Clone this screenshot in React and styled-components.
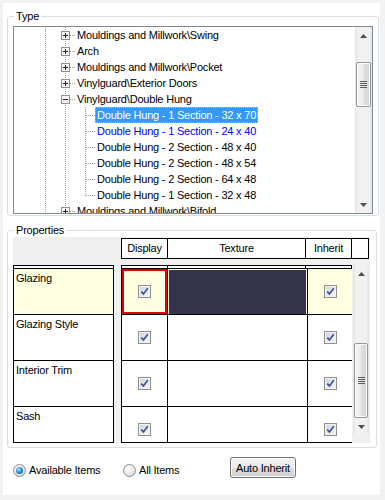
import React from "react";
import styled, { createGlobalStyle, css } from "styled-components";

const GlobalStyle = createGlobalStyle`
  html, body {
    margin: 0;
    padding: 0;
    background: #f2f2f2;
  }
  body {
    font-family: "Liberation Sans", Arial, sans-serif;
    font-size: 11px;
    letter-spacing: -0.2px;
    color: #000;
  }
`;

const treeRows = [
  { level: 1, box: "plus", text: "Mouldings and Millwork\\Swing" },
  { level: 1, box: "plus", text: "Arch" },
  { level: 1, box: "plus", text: "Mouldings and Millwork\\Pocket" },
  { level: 1, box: "plus", text: "Vinylguard\\Exterior Doors" },
  { level: 1, box: "minus", text: "Vinylguard\\Double Hung" },
  { level: 2, text: "Double Hung - 1 Section - 32 x 70", state: "selected" },
  { level: 2, text: "Double Hung - 1 Section - 24 x 40", state: "hot" },
  { level: 2, text: "Double Hung - 2 Section - 48 x 40" },
  { level: 2, text: "Double Hung - 2 Section - 48 x 54" },
  { level: 2, text: "Double Hung - 2 Section - 64 x 48" },
  { level: 2, text: "Double Hung - 1 Section - 32 x 48", last: true },
  { level: 1, box: "plus", text: "Mouldings and Millwork\\Bifold" },
];

const properties = [
  { name: "Glazing", current: true, texture: "#33334a" },
  { name: "Glazing Style" },
  { name: "Interior Trim" },
  { name: "Sash" },
];

function App() {
  return (
    <>
      <GlobalStyle />
      <Window>
        <GroupBox $w={372} $pt={3} $pb={1}>
          <Legend>Type</Legend>
          <TreeView>
            <TreeBody>
              {treeRows.map((row, i) => (
                <TreeRow key={i}>
                  <Indent />
                  <TreeGuide line="full" />
                  {row.level === 1 ? (
                    <TreeGuide line="full" branch box={row.box} />
                  ) : (
                    <>
                      <TreeGuide line="full" />
                      <TreeGuide line={row.last ? "half" : "full"} branch />
                    </>
                  )}
                  <NodeText $state={row.state}>{row.text}</NodeText>
                </TreeRow>
              ))}
            </TreeBody>
            <ScrollBar $w={17} $offset={18} $thumb={45} />
          </TreeView>
        </GroupBox>

        <GroupBox $w={370} $mt={8} $pt={0} $pb={4}>
          <Legend>Properties</Legend>
          <GridControl>
            <HeaderRow>
              <HeaderCell $w={45}>Display</HeaderCell>
              <HeaderCell $w={137}>Texture</HeaderCell>
              <HeaderCell $w={45}>Inherit</HeaderCell>
              <HeaderCell $w={16} />
            </HeaderRow>
            <GridBody>
              <NameColumn>
                <Row $h={2} $first />
                {properties.map((p) => (
                  <Row key={p.name} $h={46} $current={p.current}>
                    <NameCell>{p.name}</NameCell>
                  </Row>
                ))}
              </NameColumn>
              <ValueColumn>
                <Row $h={2} $first>
                  <Cell $w={45} />
                  <Cell $w={137} />
                  <Cell $w={45} />
                </Row>
                {properties.map((p) => (
                  <Row key={p.name} $h={46} $current={p.current}>
                    <Cell $w={45} $focused={p.current}>
                      <CheckBox />
                    </Cell>
                    <Cell $w={137} $swatch>
                      {p.texture && <Swatch $color={p.texture} />}
                    </Cell>
                    <Cell $w={45}>
                      <CheckBox />
                    </Cell>
                  </Row>
                ))}
              </ValueColumn>
              <ScrollBar $w={16} $offset={61} $thumb={75} $gap />
            </GridBody>
          </GridControl>
        </GroupBox>

        <OptionsRow>
          <RadioOption $w={110}>
            <Radio $checked />
            Available Items
          </RadioOption>
          <RadioOption $w={107}>
            <Radio />
            All Items
          </RadioOption>
          <PushButton type="button">Auto Inherit</PushButton>
        </OptionsRow>
      </Window>
    </>
  );
}

function TreeGuide({ line, branch, box }) {
  return (
    <GuideSvg width="20" height="16" viewBox="0 0 20 16">
      {line && (
        <line
          x1="10.5"
          y1="0"
          x2="10.5"
          y2={line === "full" ? 16 : 9}
          stroke="#a0a0a0"
          strokeDasharray="1 1"
        />
      )}
      {branch && (
        <line x1={box ? 15 : 11} y1="8.5" x2="20" y2="8.5" stroke="#a0a0a0" strokeDasharray="1 1" />
      )}
      {box && (
        <g>
          <rect x="6.5" y="4.5" width="8" height="8" fill="#f6f6f6" stroke="#919191" />
          <line x1="8" y1="8.5" x2="13" y2="8.5" stroke="#222" />
          {box === "plus" && <line x1="10.5" y1="6" x2="10.5" y2="11" stroke="#222" />}
        </g>
      )}
    </GuideSvg>
  );
}

function ScrollBar({ $w, $offset, $thumb, $gap }) {
  return (
    <ScrollTrackBar $w={$w} $gap={$gap}>
      <ScrollArrow>
        <svg width="7" height="4" viewBox="0 0 7 4">
          <path d="M0 4 L3.5 0 L7 4 Z" fill="#4d4d4d" />
        </svg>
      </ScrollArrow>
      <ScrollTrack $offset={$offset}>
        <ScrollThumb $size={$thumb}>
          <svg width="7" height="8" viewBox="0 0 7 8">
            {[0, 2, 4, 6].map((y) => (
              <rect key={y} x="0" y={y} width="7" height="1" fill="#5d5d5d" />
            ))}
          </svg>
        </ScrollThumb>
      </ScrollTrack>
      <ScrollArrow>
        <svg width="7" height="4" viewBox="0 0 7 4">
          <path d="M0 0 L7 0 L3.5 4 Z" fill="#4d4d4d" />
        </svg>
      </ScrollArrow>
    </ScrollTrackBar>
  );
}

function CheckBox() {
  return (
    <CheckFrame>
      <svg width="9" height="9" viewBox="0 0 9 9">
        <path d="M1.3 4.6 L3.4 6.9 L7.8 1.2" fill="none" stroke="#3d53a0" strokeWidth="1.7" />
      </svg>
    </CheckFrame>
  );
}

export default App;

const Window = styled.div`
  margin: 3px 0 0 3px;
  width: 377px;
  height: 492px;
  box-sizing: border-box;
  background: #fff;
  padding: 7px 0 0 4px;
  display: flex;
  flex-direction: column;
`;

const GroupBox = styled.fieldset`
  margin: ${(p) => p.$mt || 0}px 0 0 0;
  padding: ${(p) => p.$pt}px 0 ${(p) => p.$pb}px 5px;
  width: ${(p) => p.$w}px;
  min-width: 0;
  box-sizing: border-box;
  border: 1px solid #d5dfe5;
  border-radius: 3px;
`;

const Legend = styled.legend`
  margin-left: 1px;
  padding: 0 2px;
  line-height: 13px;
  font-size: 11px;
`;

const TreeView = styled.div`
  width: 360px;
  height: 188px;
  box-sizing: border-box;
  border: 1px solid #828790;
  display: flex;
  overflow: hidden;
  background: #fff;
`;

const TreeBody = styled.div`
  flex: 1;
  display: flex;
  flex-direction: column;
  overflow: hidden;
`;

const TreeRow = styled.div`
  display: flex;
  height: 16px;
  flex: none;
`;

const Indent = styled.div`
  width: 21px;
  flex: none;
`;

const GuideSvg = styled.svg`
  flex: none;
  display: block;
  shape-rendering: crispEdges;
`;

const NodeText = styled.span`
  height: 16px;
  line-height: 16px;
  padding: 0 2px;
  white-space: nowrap;
  color: ${(p) => (p.$state === "hot" ? "#0000ff" : p.$state === "selected" ? "#fff" : "#000")};
  background: ${(p) => (p.$state === "selected" ? "#3399ff" : "transparent")};
  ${(p) =>
    p.$state === "selected" &&
    css`
      outline: 1px dotted #ffb347;
      outline-offset: -1px;
    `}
`;

const ScrollTrackBar = styled.div`
  width: ${(p) => p.$w}px;
  margin-left: ${(p) => (p.$gap ? 1 : 0)}px;
  flex: none;
  display: flex;
  flex-direction: column;
  background: linear-gradient(to right, #e4e4e4 0, #f1f1f1 3px, #f1f1f1 calc(100% - 3px), #e4e4e4 100%);
`;

const ScrollArrow = styled.div`
  height: 17px;
  flex: none;
  display: flex;
  align-items: center;
  justify-content: center;
`;

const ScrollTrack = styled.div`
  flex: 1;
  display: flex;
  flex-direction: column;
  padding-top: ${(p) => p.$offset}px;
`;

const ScrollThumb = styled.div`
  height: ${(p) => p.$size}px;
  margin: 0 1px;
  flex: none;
  box-sizing: border-box;
  border: 1px solid #979797;
  border-radius: 2px;
  background: linear-gradient(to right, #f3f3f3 0%, #ececec 45%, #dedede 55%, #d3d3d3 100%);
  box-shadow: inset 0 0 0 1px #fafafa;
  display: flex;
  align-items: center;
  justify-content: center;
`;

const GridControl = styled.div`
  width: 357px;
  height: 206px;
  background: #f0f0f0;
  display: flex;
  flex-direction: column;
`;

const HeaderRow = styled.div`
  display: flex;
  align-self: flex-start;
  margin: 1px 0 0 108px;
  border: 1px solid #000;
  border-right: none;
  background: #fff;
`;

const HeaderCell = styled.div`
  width: ${(p) => p.$w}px;
  height: 19px;
  line-height: 19px;
  text-align: center;
  border-right: 1px solid #000;
`;

const GridBody = styled.div`
  display: flex;
  align-items: flex-start;
  margin-top: 6px;
  height: 178px;
`;

const NameColumn = styled.div`
  width: 101px;
  height: 178px;
  box-sizing: border-box;
  border: 1px solid #000;
  background: #fff;
  display: flex;
  flex-direction: column;
  overflow: hidden;
`;

const ValueColumn = styled.div`
  width: 231px;
  height: 178px;
  margin-left: 7px;
  box-sizing: border-box;
  border: 1px solid #000;
  border-right: none;
  background: #fff;
  display: flex;
  flex-direction: column;
  overflow: hidden;
`;

const Row = styled.div`
  display: flex;
  flex: none;
  height: ${(p) => p.$h}px;
  box-sizing: border-box;
  border-top: ${(p) => (p.$first ? "none" : "1px solid #000")};
  background: ${(p) => (p.$current ? "#ffffe1" : "#fff")};
`;

const NameCell = styled.div`
  padding: 2px 2px;
  line-height: 14px;
`;

const Cell = styled.div`
  width: ${(p) => p.$w}px;
  flex: none;
  border-right: 1px solid #000;
  display: flex;
  align-items: center;
  justify-content: center;
  ${(p) =>
    p.$swatch &&
    css`
      padding: 1px 1px 0 1px;
      align-items: stretch;
      justify-content: stretch;
    `}
  ${(p) =>
    p.$focused &&
    css`
      box-shadow: inset 0 0 0 2px #e00000;
    `}
`;

const Swatch = styled.div`
  flex: 1;
  background: ${(p) => p.$color};
`;

const CheckFrame = styled.span`
  width: 13px;
  height: 13px;
  box-sizing: border-box;
  border: 1px solid #8e8f8f;
  background: linear-gradient(135deg, #cfd2d6 0%, #e6e8ea 55%, #f7f7f7 100%);
  box-shadow: inset 0 0 0 1px #f2f2f2;
  display: flex;
  align-items: center;
  justify-content: center;
`;

const OptionsRow = styled.div`
  display: flex;
  align-items: flex-start;
  margin: 9px 0 0 6px;
`;

const RadioOption = styled.label`
  width: ${(p) => p.$w}px;
  flex: none;
  display: flex;
  align-items: center;
  gap: 3px;
  margin-top: 7px;
  line-height: 13px;
`;

const Radio = styled.span`
  width: 13px;
  height: 13px;
  flex: none;
  box-sizing: border-box;
  border-radius: 50%;
  border: 1px solid #8e8f8f;
  background: radial-gradient(circle at 40% 35%, #ffffff 0%, #e6e6e6 55%, #cdcdcd 100%);
  display: flex;
  align-items: center;
  justify-content: center;
  &::after {
    content: "";
    width: 7px;
    height: 7px;
    border-radius: 50%;
    background: radial-gradient(circle at 40% 35%, #a8e6ff 0%, #2a8fd6 50%, #0e4f8c 100%);
    display: ${(p) => (p.$checked ? "block" : "none")};
  }
`;

const PushButton = styled.button`
  width: 66px;
  height: 21px;
  padding: 0;
  font-family: inherit;
  font-size: 11px;
  letter-spacing: -0.2px;
  color: #000;
  border: 1px solid #707070;
  border-radius: 3px;
  background: linear-gradient(to bottom, #f2f2f2 0%, #ebebeb 50%, #dddddd 51%, #cfcfcf 100%);
  box-shadow: inset 0 0 0 1px #fcfcfc;
`;
